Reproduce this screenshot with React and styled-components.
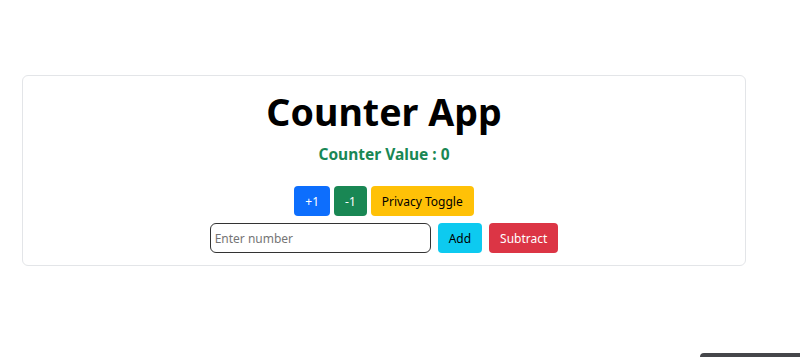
import React, { useState } from 'react'
import styled, { createGlobalStyle } from 'styled-components'

const GlobalStyle = createGlobalStyle`
    html, body {
        margin: 0;
        padding: 0;
        background: #fff;
        font-family: "Noto Sans", "Open Sans", sans-serif;
        color: #212529;
    }
`

const Page = styled.div`
    position: relative;
    width: 800px;
    height: 357px;
    overflow: hidden;
    padding-top: 75px;
    box-sizing: border-box;
`

const Card = styled.div`
    margin-left: 22px;
    width: 724px;
    box-sizing: border-box;
    border: 1px solid #e3e5e8;
    border-radius: 6px;
    padding: 13px 16px 12px;
    display: flex;
    flex-direction: column;
    align-items: center;
`

const Title = styled.h1`
    margin: 0;
    font-size: 37.6px;
    line-height: 46px;
    font-weight: 700;
    color: #000;
`

const Subtitle = styled.h5`
    margin: 8px 0 0;
    font-size: 15.5px;
    line-height: 22px;
    font-weight: 700;
    color: #198754;
`

const Row = styled.div`
    display: flex;
    justify-content: center;
    align-items: center;
    gap: ${({gap}) => gap}px;
    margin-top: ${({top}) => top}px;
`

const colors = {
    primary: ['#0d6efd', '#fff'],
    success: ['#198754', '#fff'],
    warning: ['#ffc107', '#000'],
    info: ['#0dcaf0', '#000'],
    danger: ['#dc3545', '#fff'],
}

const Button = styled.button`
    height: 30px;
    padding: 0 11px;
    border: none;
    border-radius: 4px;
    font-family: inherit;
    font-size: 12px;
    background: ${({variant}) => colors[variant][0]};
    color: ${({variant}) => colors[variant][1]};
    cursor: pointer;
`

const NumberInput = styled.input`
    width: 221px;
    height: 30px;
    box-sizing: border-box;
    border: 1px solid #333;
    border-radius: 6px;
    padding: 0 4px;
    font-family: inherit;
    font-size: 12px;
    color: #212529;
    &::placeholder {
        color: #757575;
    }
`

const CornerTab = styled.div`
    position: absolute;
    right: 0;
    bottom: 0;
    width: 100px;
    height: 4px;
    background: #45464a;
    border-top-left-radius: 4px;
`

export default function App() {
    const [count, setCount] = useState(0)
    const [value, setValue] = useState('')
    const [hidden, setHidden] = useState(false)

    const num = Number(value) || 0

    return (
        <Page>
            <GlobalStyle />
            <Card>
                <Title>Counter App</Title>
                <Subtitle>Counter Value : {hidden ? '***' : count}</Subtitle>
                <Row gap={4} top={21}>
                    <Button variant="primary" onClick={() => setCount(count + 1)}>+1</Button>
                    <Button variant="success" onClick={() => setCount(count - 1)}>-1</Button>
                    <Button variant="warning" onClick={() => setHidden(!hidden)}>Privacy Toggle</Button>
                </Row>
                <Row gap={7} top={7}>
                    <NumberInput
                        type="number"
                        placeholder="Enter number"
                        value={value}
                        onChange={e => setValue(e.target.value)}
                    />
                    <Button variant="info" onClick={() => setCount(count + num)}>Add</Button>
                    <Button variant="danger" onClick={() => setCount(count - num)}>Subtract</Button>
                </Row>
            </Card>
            <CornerTab />
        </Page>
    )
}
